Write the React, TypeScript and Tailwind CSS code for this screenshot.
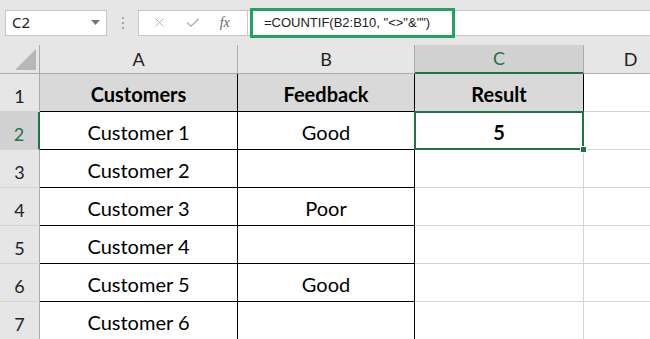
import { X, Check } from 'lucide-react';

const cols = ['A', 'B', 'C', 'D'];

const rows: { a: string; b: string }[] = [
  { a: 'Customers', b: 'Feedback' },
  { a: 'Customer 1', b: 'Good' },
  { a: 'Customer 2', b: '' },
  { a: 'Customer 3', b: 'Poor' },
  { a: 'Customer 4', b: '' },
  { a: 'Customer 5', b: 'Good' },
  { a: 'Customer 6', b: '' },
];

const cellFont = { fontFamily: 'Lato, "Open Sans", sans-serif' };

export default function App() {
  return (
    <div className="w-[650px] h-[339px] overflow-hidden bg-white" style={{ fontFamily: '"Noto Sans", "Open Sans", sans-serif' }}>
      {/* formula bar */}
      <div className="h-[45px] bg-[#e6e6e6] flex items-center pl-[5px]">
        <div className="w-[102px] h-[26px] bg-white border border-[#c6c6c6] flex items-center justify-between pl-[6px] pr-[6px]">
          <span className="text-[15px] text-[#222]">C2</span>
          <svg width="9" height="5" viewBox="0 0 9 5"><path d="M0 0h9L4.5 5z" fill="#777" /></svg>
        </div>
        <div className="w-[31px] flex flex-col items-center gap-[3px]">
          <span className="w-[2px] h-[2px] bg-[#a6a6a6]" />
          <span className="w-[2px] h-[2px] bg-[#a6a6a6]" />
          <span className="w-[2px] h-[2px] bg-[#a6a6a6]" />
        </div>
        <div className="w-[110px] h-[26px] bg-white border border-[#c6c6c6] flex items-center justify-around pl-[4px] pr-[8px]">
          <X size={15} strokeWidth={1.5} color="#b0b0b0" />
          <Check size={16} strokeWidth={2} color="#b0b0b0" />
          <span className="italic text-[14px] text-[#666]" style={{ fontFamily: '"Liberation Serif", serif' }}>fx</span>
        </div>
        <div className="flex-1 h-[26px] bg-white border-y border-[#c6c6c6] relative flex items-center">
          <div className="absolute left-[2px] top-[-3px] w-[205px] h-[30px] border-[3px] border-[#21a366]" />
          <span className="pl-[16px] text-[13px] text-[#222]" style={{ fontFamily: '"Liberation Sans", Arial, sans-serif' }}>
            =COUNTIF(B2:B10, "&lt;&gt;"&amp;"")
          </span>
        </div>
      </div>

      {/* sheet */}
      <div className="grid grid-cols-[40px_198px_177px_169px_94px] grid-rows-[29px_repeat(7,38px)]" style={cellFont}>
        {/* corner */}
        <div className="bg-[#e6e6e6] border-r border-b border-[#ababab] flex items-end justify-end pr-[3px] pb-[3px]">
          <svg width="21" height="21" viewBox="0 0 21 21"><path d="M21 0v21H0z" fill="#b7b7b7" /></svg>
        </div>
        {cols.map((c) =>
          c === 'C' ? (
            <div key={c} className="bg-[#d2d2d2] border-r border-[#ababab] border-b-2 border-b-[#217346] flex items-center justify-center text-[18px] text-[#217346]">
              {c}
            </div>
          ) : (
            <div key={c} className="bg-[#e6e6e6] border-r border-b border-[#ababab] flex items-center justify-center text-[18px] text-[#222]">
              {c}
            </div>
          )
        )}

        {rows.map((r, i) => {
          const n = i + 1;
          const head = i === 0;
          const sel = n === 2;
          return [
            <div
              key={`h${n}`}
              className={
                sel
                  ? 'bg-[#d2d2d2] border-r-2 border-r-[#217346] border-b border-b-[#d4d4d4] flex items-center justify-center text-[18px] text-[#217346] pt-[8px]'
                  : 'bg-[#e6e6e6] border-r border-r-[#ababab] border-b border-b-[#d4d4d4] flex items-center justify-center text-[18px] text-[#222] pt-[8px]'
              }
            >
              {n}
            </div>,
            <div
              key={`a${n}`}
              className={`border-r border-b border-black flex items-center justify-center pt-[3px] text-[20px] text-black ${head ? 'bg-[#d9d9d9] font-bold' : ''}`}
            >
              {r.a}
            </div>,
            <div
              key={`b${n}`}
              className={`border-r border-b border-black flex items-center justify-center pt-[3px] text-[20px] text-black ${head ? 'bg-[#d9d9d9] font-bold' : ''}`}
            >
              {r.b}
            </div>,
            head ? (
              <div key={`c${n}`} className="bg-[#d9d9d9] border-r border-b border-black flex items-center justify-center pt-[3px] text-[20px] font-bold text-black">
                Result
              </div>
            ) : sel ? (
              <div key={`c${n}`} className="relative border-r border-b border-black flex items-center justify-center pt-[3px] text-[20px] font-bold text-black">
                5
                <div className="absolute -left-px -top-px -right-px -bottom-px border-2 border-[#217346]" />
                <div className="absolute -right-[4px] -bottom-[4px] w-[7px] h-[7px] bg-[#217346] border border-white" />
              </div>
            ) : (
              <div key={`c${n}`} className="border-r border-b border-[#d4d4d4]" />
            ),
            <div key={`d${n}`} className="border-r border-b border-[#d4d4d4]" />,
          ];
        })}
      </div>
    </div>
  );
}
